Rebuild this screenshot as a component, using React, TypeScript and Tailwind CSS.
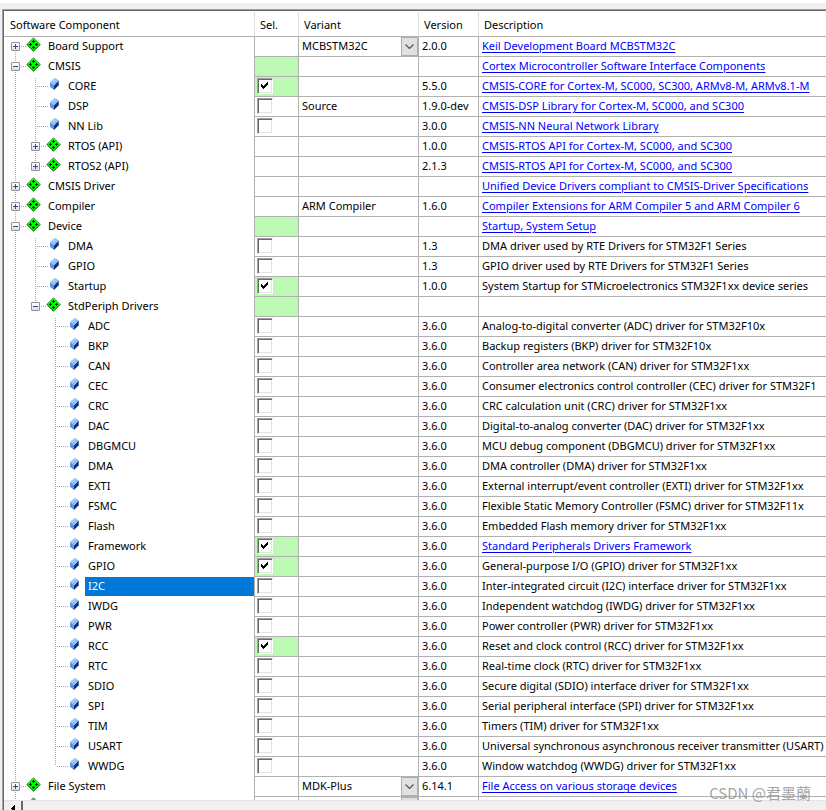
import React from "react";
import clsx from "clsx";

type TGuide = "none" | "line" | "tee" | "end";

type TRow = {
  name: string;
  level: number;
  kind: "open" | "closed" | "leaf";
  guides: TGuide[];
  check?: boolean;
  green?: boolean;
  variant?: string;
  combo?: boolean;
  version?: string;
  text?: string;
  link?: boolean;
};

const root = (
  name: string,
  kind: TRow["kind"],
  rest: Partial<TRow> = {},
): TRow => ({ name, level: 0, kind, guides: ["tee"], ...rest });

const child = (
  name: string,
  kind: TRow["kind"],
  rest: Partial<TRow> = {},
): TRow => ({ name, level: 1, kind, guides: ["line", "tee"], ...rest });

const driver = (
  name: string,
  text: string,
  rest: Partial<TRow> = {},
): TRow => ({
  name,
  level: 2,
  kind: "leaf",
  guides: ["line", "none", "tee"],
  check: false,
  version: "3.6.0",
  text,
  ...rest,
});

const ROWS: TRow[] = [
  root("Board Support", "closed", {
    variant: "MCBSTM32C",
    combo: true,
    version: "2.0.0",
    text: "Keil Development Board MCBSTM32C",
    link: true,
  }),
  root("CMSIS", "open", {
    green: true,
    text: "Cortex Microcontroller Software Interface Components",
    link: true,
  }),
  child("CORE", "leaf", {
    check: true,
    version: "5.5.0",
    text: "CMSIS-CORE for Cortex-M, SC000, SC300, ARMv8-M, ARMv8.1-M",
    link: true,
  }),
  child("DSP", "leaf", {
    check: false,
    variant: "Source",
    version: "1.9.0-dev",
    text: "CMSIS-DSP Library for Cortex-M, SC000, and SC300",
    link: true,
  }),
  child("NN Lib", "leaf", {
    check: false,
    version: "3.0.0",
    text: "CMSIS-NN Neural Network Library",
    link: true,
  }),
  child("RTOS (API)", "closed", {
    version: "1.0.0",
    text: "CMSIS-RTOS API for Cortex-M, SC000, and SC300",
    link: true,
  }),
  child("RTOS2 (API)", "closed", {
    guides: ["line", "end"],
    version: "2.1.3",
    text: "CMSIS-RTOS API for Cortex-M, SC000, and SC300",
    link: true,
  }),
  root("CMSIS Driver", "closed", {
    text: "Unified Device Drivers compliant to CMSIS-Driver Specifications",
    link: true,
  }),
  root("Compiler", "closed", {
    variant: "ARM Compiler",
    version: "1.6.0",
    text: "Compiler Extensions for ARM Compiler 5 and ARM Compiler 6",
    link: true,
  }),
  root("Device", "open", {
    green: true,
    text: "Startup, System Setup",
    link: true,
  }),
  child("DMA", "leaf", {
    check: false,
    version: "1.3",
    text: "DMA driver used by RTE Drivers for STM32F1 Series",
  }),
  child("GPIO", "leaf", {
    check: false,
    version: "1.3",
    text: "GPIO driver used by RTE Drivers for STM32F1 Series",
  }),
  child("Startup", "leaf", {
    check: true,
    version: "1.0.0",
    text: "System Startup for STMicroelectronics STM32F1xx device series",
  }),
  child("StdPeriph Drivers", "open", { guides: ["line", "end"], green: true }),
  driver("ADC", "Analog-to-digital converter (ADC) driver for STM32F10x"),
  driver("BKP", "Backup registers (BKP) driver for STM32F10x"),
  driver("CAN", "Controller area network (CAN) driver for STM32F1xx"),
  driver("CEC", "Consumer electronics control controller (CEC) driver for STM32F1"),
  driver("CRC", "CRC calculation unit (CRC) driver for STM32F1xx"),
  driver("DAC", "Digital-to-analog converter (DAC) driver for STM32F1xx"),
  driver("DBGMCU", "MCU debug component (DBGMCU) driver for STM32F1xx"),
  driver("DMA", "DMA controller (DMA) driver for STM32F1xx"),
  driver("EXTI", "External interrupt/event controller (EXTI) driver for STM32F1xx"),
  driver("FSMC", "Flexible Static Memory Controller (FSMC) driver for STM32F11x"),
  driver("Flash", "Embedded Flash memory driver for STM32F1xx"),
  driver("Framework", "Standard Peripherals Drivers Framework", {
    check: true,
    link: true,
  }),
  driver("GPIO", "General-purpose I/O (GPIO) driver for STM32F1xx", {
    check: true,
  }),
  driver("I2C", "Inter-integrated circuit (I2C) interface driver for STM32F1xx"),
  driver("IWDG", "Independent watchdog (IWDG) driver for STM32F1xx"),
  driver("PWR", "Power controller (PWR) driver for STM32F1xx"),
  driver("RCC", "Reset and clock control (RCC) driver for STM32F1xx", {
    check: true,
  }),
  driver("RTC", "Real-time clock (RTC) driver for STM32F1xx"),
  driver("SDIO", "Secure digital (SDIO) interface driver for STM32F1xx"),
  driver("SPI", "Serial peripheral interface (SPI) driver for STM32F1xx"),
  driver("TIM", "Timers (TIM) driver for STM32F1xx"),
  driver("USART", "Universal synchronous asynchronous receiver transmitter (USART)"),
  driver("WWDG", "Window watchdog (WWDG) driver for STM32F1xx", {
    guides: ["line", "none", "end"],
  }),
  root("File System", "closed", {
    variant: "MDK-Plus",
    combo: true,
    version: "6.14.1",
    text: "File Access on various storage devices",
    link: true,
  }),
  root("", "closed", { combo: true, variant: "" }),
];

function Guide({
  type,
  first,
  leaf,
}: {
  type: TGuide;
  first: boolean;
  leaf: boolean;
}) {
  const bottom = type === "end" ? 9 : 20;
  return (
    <svg
      className="w-5 h-5 overflow-visible shrink-0"
      viewBox="0 0 20 20"
      shapeRendering="crispEdges"
      stroke="#a8a8a8"
      strokeDasharray="1 1"
      aria-hidden="true"
    >
      {type !== "none" && <path d={`M10.5 ${first ? 9 : 1}V${bottom}`} />}
      {(type === "tee" || type === "end") && (
        <path d={leaf ? "M12 9.5H23" : "M16 9.5H22"} />
      )}
    </svg>
  );
}

function Diamond() {
  return (
    <svg className="w-[15px] h-[15px]" viewBox="0 0 15 15" aria-hidden="true">
      <path d="M7.5 .5 14.5 7.5 7.5 14.5 .5 7.5z" fill="#00ff00" />
      <path d="M.8 7.5 7.5 .8 14.2 7.5" fill="none" stroke="#6f806f" strokeWidth=".9" />
      <path d="M.8 7.5 7.5 14.2 14.2 7.5" fill="none" stroke="#303a30" strokeWidth=".9" />
      <path
        d="M7 3h1v1h1v1h-1v1h-1v-1h-1v-1h1zM4 6h1v1h1v1h-1v1h-1v-1h-1v-1h1zM10 6h1v1h1v1h-1v1h-1v-1h-1v-1h1zM7 9h1v1h1v1h-1v1h-1v-1h-1v-1h1z"
        fill="#001400"
      />
    </svg>
  );
}

function Brick() {
  return (
    <svg className="w-[9px] h-3" viewBox="0 0 9 12" aria-hidden="true">
      <path d="M0 4 4.8 0 8.7 2.2 4 7.2z" fill="#86bcf0" />
      <path d="M1 4 4.8 1l1.6 1L2.6 5.2z" fill="#a9d2f8" />
      <path d="M0 4 4 7.2V12L0 8.8z" fill="#5a94da" />
      <path d="M4 7.2 8.7 2.2v5L4 12z" fill="#082f8a" />
      <path d="M4 7.2 8.7 2.2" fill="none" stroke="#cfe4fa" strokeWidth=".6" />
    </svg>
  );
}

function Expander({
  open,
  name,
  onClick,
}: {
  open: boolean;
  name: string;
  onClick: () => void;
}) {
  return (
    <button
      type="button"
      aria-label={`${open ? "Collapse" : "Expand"} ${name}`}
      aria-expanded={open}
      onClick={onClick}
      className="absolute left-1.5 top-[5px] size-[9px] rounded-[1px] border border-[#919191] bg-linear-to-b from-white to-[#dedede]"
    >
      <svg
        className="block size-[7px]"
        viewBox="0 0 7 7"
        shapeRendering="crispEdges"
        stroke="#2f4b9c"
      >
        <path d={open ? "M1 3.5h5" : "M1 3.5h5M3.5 1v5"} />
      </svg>
    </button>
  );
}

function TreeCell({
  row,
  first,
  selected,
  onSelect,
}: {
  row: TRow;
  first: boolean;
  selected: boolean;
  onSelect: () => void;
}) {
  const [open, setOpen] = React.useState(row.kind === "open");
  const leaf = row.kind === "leaf";
  return (
    <div className="flex h-5 pl-px">
      {row.guides.map((type, i) => (
        <div key={i} className="relative w-5 h-5 shrink-0">
          <Guide type={type} first={first} leaf={leaf} />
          {!leaf && i === row.level && (
            <Expander open={open} name={row.name} onClick={() => setOpen(!open)} />
          )}
        </div>
      ))}
      <div
        className={clsx(
          "relative flex w-5 h-5 shrink-0",
          leaf ? "pl-[5px] pt-px" : "pl-px",
        )}
      >
        {leaf ? <Brick /> : <Diamond />}
      </div>
      <div
        onClick={onSelect}
        className={clsx(
          "flex-1 h-[19px] pl-[3px] leading-[17px]",
          selected && "bg-[#0078d7] text-white",
        )}
      >
        {row.name}
      </div>
    </div>
  );
}

function Check({ name, defaultChecked }: { name: string; defaultChecked: boolean }) {
  return (
    <label className="relative block ml-0.5 mt-px size-4">
      <input
        type="checkbox"
        aria-label={`Select ${name}`}
        defaultChecked={defaultChecked}
        className="block bg-white border appearance-none peer size-4 border-t-[#a0a0a0] border-l-[#a0a0a0] border-b-white border-r-white shadow-[inset_1px_1px_#696969,inset_-1px_-1px_#e3e3e3]"
      />
      <svg
        className="absolute hidden pointer-events-none left-1 top-1 size-[7px] peer-checked:block"
        viewBox="0 0 7 7"
        shapeRendering="crispEdges"
        aria-hidden="true"
      >
        <path d="M0 2h1v1h1v1h1v-1h1v-1h1v-1h1v-1h1v3h-1v1h-1v1h-1v1h-1v1h-1v-1h-1v-1h-1z" />
      </svg>
    </label>
  );
}

function VariantSelect({ name, value }: { name: string; value: string }) {
  return (
    <div className="relative h-[19px]">
      <select
        aria-label={`Variant of ${name}`}
        className="block w-full h-[17px] pl-[3px] pr-5 leading-[17px] bg-white appearance-none"
      >
        <option>{value}</option>
      </select>
      <span className="absolute inset-y-0 right-0 flex items-center justify-center w-[17px] border border-[#adadad] bg-[#e1e1e1] pointer-events-none">
        <svg className="w-[9px] h-[5px]" viewBox="0 0 9 5" fill="none" stroke="#555" strokeWidth="1.2">
          <path d="M.5 .5l4 4 4-4" />
        </svg>
      </span>
    </div>
  );
}

const th = "h-[25px] pt-0.5 font-normal text-left border-b border-b-[#b1b1b1]";
const td = "p-0 h-5 border-b border-l border-[#b1b1b1] align-top leading-[17px] overflow-hidden whitespace-nowrap";

export default function App() {
  const [selected, setSelected] = React.useState(
    ROWS.findIndex((row) => row.name === "I2C"),
  );

  return (
    <div className="relative flex flex-col h-screen overflow-hidden bg-white pt-[3px] font-['Noto_Sans',sans-serif] text-[11px] text-black">
      <div className="flex flex-col flex-1 min-h-0 bg-[#f0f0f0] pt-1.5 pl-0.5">
        <div className="flex flex-col flex-1 min-h-0 border-t border-l border-[#a0a0a0]">
          <div className="flex flex-col flex-1 min-h-0 border-t border-l border-[#696969] bg-white">
            <div className="flex-1 min-h-0 pt-px overflow-hidden">
              <table className="w-full border-separate table-fixed border-spacing-0">
                <colgroup>
                  <col className="w-[250px]" />
                  <col className="w-11" />
                  <col className="w-[120px]" />
                  <col className="w-[60px]" />
                  <col />
                </colgroup>
                <thead>
                  <tr>
                    <th className={clsx(th, "pl-1.5")}>Software Component</th>
                    <th className={clsx(th, "pl-[5px] border-l border-l-[#e0e0e0]")}>Sel.</th>
                    <th className={clsx(th, "pl-[5px] border-l border-l-[#e0e0e0]")}>Variant</th>
                    <th className={clsx(th, "pl-[5px] border-l border-l-[#e0e0e0]")}>Version</th>
                    <th className={clsx(th, "pl-[5px] border-l border-l-[#e0e0e0]")}>Description</th>
                  </tr>
                </thead>
                <tbody>
                  {ROWS.map((row, i) => (
                    <tr key={i}>
                      <td className="p-0 h-5 align-top">
                        <TreeCell
                          row={row}
                          first={i === 0}
                          selected={i === selected}
                          onSelect={() => setSelected(i)}
                        />
                      </td>
                      <td className={clsx(td, (row.green || row.check) && "bg-[#bdf8b4]")}>
                        {row.check !== undefined && (
                          <Check name={row.name} defaultChecked={row.check} />
                        )}
                      </td>
                      <td className={td}>
                        {row.combo ? (
                          <VariantSelect name={row.name} value={row.variant ?? ""} />
                        ) : (
                          <span className="pl-[3px]">{row.variant}</span>
                        )}
                      </td>
                      <td className={clsx(td, "pl-[3px]")}>{row.version}</td>
                      <td className={clsx(td, "pl-[3px]")}>
                        {row.link ? (
                          <a href="#" className="text-[#0000ff] underline underline-offset-2">
                            {row.text}
                          </a>
                        ) : (
                          row.text
                        )}
                      </td>
                    </tr>
                  ))}
                </tbody>
              </table>
            </div>
            <div className="flex h-2.5 pl-px overflow-hidden bg-[#f0f0f0] border-t border-[#e3e3e3] shrink-0">
              <button
                type="button"
                aria-label="Scroll left"
                className="flex justify-center w-[18px] h-4 pt-1 bg-[#f0f0f0] border-r-2 border-[#696969] shrink-0"
              >
                <svg className="w-1 h-[7px]" viewBox="0 0 4 7" shapeRendering="crispEdges">
                  <path d="M4 0v7L0 3.5z" />
                </svg>
              </button>
            </div>
          </div>
        </div>
      </div>
      <p className="absolute right-[15px] bottom-[5px] font-['Noto_Sans_CJK_SC',sans-serif] text-[15px] leading-6 text-[#8c8c8c]/80 pointer-events-none">
        CSDN @君墨蘭
      </p>
    </div>
  );
}
